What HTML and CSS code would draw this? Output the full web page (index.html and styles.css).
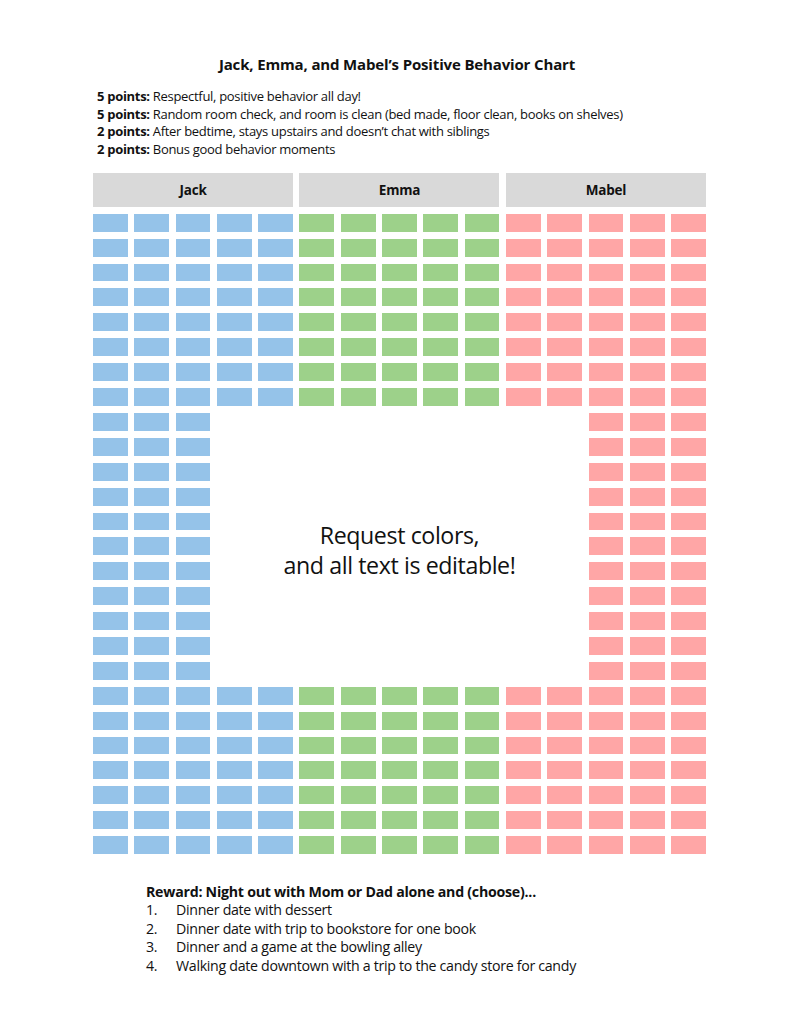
FILE: index.html
```html
<!DOCTYPE html>
<html>
<head>
<meta charset="utf-8">
<link rel="stylesheet" href="styles.css">
</head>
<body>
<h1 class="title">Jack, Emma, and Mabel’s Positive Behavior Chart</h1>
<ul class="points">
<li><b>5 points:</b> Respectful, positive behavior all day!</li>
<li><b>5 points:</b> Random room check, and room is clean (bed made, floor clean, books on shelves)</li>
<li><b>2 points:</b> After bedtime, stays upstairs and doesn’t chat with siblings</li>
<li><b>2 points:</b> Bonus good behavior moments</li>
</ul>
<div class="chart">
<div class="head">Jack</div><div class="head">Emma</div><div class="head">Mabel</div>
<div class="note">Request colors,<br>and all text is editable!</div>
<i class="b"></i><i class="b"></i><i class="b"></i><i class="b"></i><i class="b"></i><i class="g"></i><i class="g"></i><i class="g"></i><i class="g"></i><i class="g"></i><i class="r"></i><i class="r"></i><i class="r"></i><i class="r"></i><i class="r"></i>
<i class="b"></i><i class="b"></i><i class="b"></i><i class="b"></i><i class="b"></i><i class="g"></i><i class="g"></i><i class="g"></i><i class="g"></i><i class="g"></i><i class="r"></i><i class="r"></i><i class="r"></i><i class="r"></i><i class="r"></i>
<i class="b"></i><i class="b"></i><i class="b"></i><i class="b"></i><i class="b"></i><i class="g"></i><i class="g"></i><i class="g"></i><i class="g"></i><i class="g"></i><i class="r"></i><i class="r"></i><i class="r"></i><i class="r"></i><i class="r"></i>
<i class="b"></i><i class="b"></i><i class="b"></i><i class="b"></i><i class="b"></i><i class="g"></i><i class="g"></i><i class="g"></i><i class="g"></i><i class="g"></i><i class="r"></i><i class="r"></i><i class="r"></i><i class="r"></i><i class="r"></i>
<i class="b"></i><i class="b"></i><i class="b"></i><i class="b"></i><i class="b"></i><i class="g"></i><i class="g"></i><i class="g"></i><i class="g"></i><i class="g"></i><i class="r"></i><i class="r"></i><i class="r"></i><i class="r"></i><i class="r"></i>
<i class="b"></i><i class="b"></i><i class="b"></i><i class="b"></i><i class="b"></i><i class="g"></i><i class="g"></i><i class="g"></i><i class="g"></i><i class="g"></i><i class="r"></i><i class="r"></i><i class="r"></i><i class="r"></i><i class="r"></i>
<i class="b"></i><i class="b"></i><i class="b"></i><i class="b"></i><i class="b"></i><i class="g"></i><i class="g"></i><i class="g"></i><i class="g"></i><i class="g"></i><i class="r"></i><i class="r"></i><i class="r"></i><i class="r"></i><i class="r"></i>
<i class="b"></i><i class="b"></i><i class="b"></i><i class="b"></i><i class="b"></i><i class="g"></i><i class="g"></i><i class="g"></i><i class="g"></i><i class="g"></i><i class="r"></i><i class="r"></i><i class="r"></i><i class="r"></i><i class="r"></i>
<i class="b"></i><i class="b"></i><i class="b"></i><i class="r"></i><i class="r"></i><i class="r"></i>
<i class="b"></i><i class="b"></i><i class="b"></i><i class="r"></i><i class="r"></i><i class="r"></i>
<i class="b"></i><i class="b"></i><i class="b"></i><i class="r"></i><i class="r"></i><i class="r"></i>
<i class="b"></i><i class="b"></i><i class="b"></i><i class="r"></i><i class="r"></i><i class="r"></i>
<i class="b"></i><i class="b"></i><i class="b"></i><i class="r"></i><i class="r"></i><i class="r"></i>
<i class="b"></i><i class="b"></i><i class="b"></i><i class="r"></i><i class="r"></i><i class="r"></i>
<i class="b"></i><i class="b"></i><i class="b"></i><i class="r"></i><i class="r"></i><i class="r"></i>
<i class="b"></i><i class="b"></i><i class="b"></i><i class="r"></i><i class="r"></i><i class="r"></i>
<i class="b"></i><i class="b"></i><i class="b"></i><i class="r"></i><i class="r"></i><i class="r"></i>
<i class="b"></i><i class="b"></i><i class="b"></i><i class="r"></i><i class="r"></i><i class="r"></i>
<i class="b"></i><i class="b"></i><i class="b"></i><i class="r"></i><i class="r"></i><i class="r"></i>
<i class="b"></i><i class="b"></i><i class="b"></i><i class="b"></i><i class="b"></i><i class="g"></i><i class="g"></i><i class="g"></i><i class="g"></i><i class="g"></i><i class="r"></i><i class="r"></i><i class="r"></i><i class="r"></i><i class="r"></i>
<i class="b"></i><i class="b"></i><i class="b"></i><i class="b"></i><i class="b"></i><i class="g"></i><i class="g"></i><i class="g"></i><i class="g"></i><i class="g"></i><i class="r"></i><i class="r"></i><i class="r"></i><i class="r"></i><i class="r"></i>
<i class="b"></i><i class="b"></i><i class="b"></i><i class="b"></i><i class="b"></i><i class="g"></i><i class="g"></i><i class="g"></i><i class="g"></i><i class="g"></i><i class="r"></i><i class="r"></i><i class="r"></i><i class="r"></i><i class="r"></i>
<i class="b"></i><i class="b"></i><i class="b"></i><i class="b"></i><i class="b"></i><i class="g"></i><i class="g"></i><i class="g"></i><i class="g"></i><i class="g"></i><i class="r"></i><i class="r"></i><i class="r"></i><i class="r"></i><i class="r"></i>
<i class="b"></i><i class="b"></i><i class="b"></i><i class="b"></i><i class="b"></i><i class="g"></i><i class="g"></i><i class="g"></i><i class="g"></i><i class="g"></i><i class="r"></i><i class="r"></i><i class="r"></i><i class="r"></i><i class="r"></i>
<i class="b"></i><i class="b"></i><i class="b"></i><i class="b"></i><i class="b"></i><i class="g"></i><i class="g"></i><i class="g"></i><i class="g"></i><i class="g"></i><i class="r"></i><i class="r"></i><i class="r"></i><i class="r"></i><i class="r"></i>
<i class="b"></i><i class="b"></i><i class="b"></i><i class="b"></i><i class="b"></i><i class="g"></i><i class="g"></i><i class="g"></i><i class="g"></i><i class="g"></i><i class="r"></i><i class="r"></i><i class="r"></i><i class="r"></i><i class="r"></i>
</div>
<div class="reward">
<p class="reward-title">Reward: Night out with Mom or Dad alone and (choose)...</p>
<ol class="choices">
<li><span class="num">1.</span>Dinner date with dessert</li>
<li><span class="num">2.</span>Dinner date with trip to bookstore for one book</li>
<li><span class="num">3.</span>Dinner and a game at the bowling alley</li>
<li><span class="num">4.</span>Walking date downtown with a trip to the candy store for candy</li>
</ol>
</div>
</body>
</html>
```
FILE: styles.css
```css
html, body {
  margin: 0;
  padding: 0;
  background: #ffffff;
}
body {
  font-family: "Open Sans", "Noto Sans", sans-serif;
  color: #111111;
  width: 794px;
}
.title {
  margin: 54px 0 0 0;
  font-size: 15px;
  line-height: 20px;
  font-weight: 700;
  text-align: center;
  letter-spacing: -0.15px;
}
.points {
  list-style: none;
  margin: 14px 0 0 97px;
  padding: 0;
  font-size: 13px;
  line-height: 17.7px;
  letter-spacing: -0.3px;
}
.points b {
  font-weight: 700;
}
.chart {
  margin: 14px 0 0 93px;
  width: 613px;
  display: grid;
  grid-template-columns: repeat(15, 1fr);
  grid-template-rows: 34px repeat(26, 17.9px);
  column-gap: 6.5px;
  row-gap: 7px;
}
.head {
  grid-column: span 5;
  background: #d9d9d9;
  display: flex;
  align-items: center;
  justify-content: center;
  font-weight: 700;
  font-size: 13.5px;
  letter-spacing: -0.2px;
}
.chart i {
  display: block;
}
.chart .b { background: #95c3e9; }
.chart .g { background: #9dd18a; }
.chart .r { background: #ffa6a6; }
.note {
  grid-column: 4 / 13;
  grid-row: 10 / 21;
  display: flex;
  align-items: center;
  justify-content: center;
  text-align: center;
  font-size: 23.2px;
  line-height: 30px;
  letter-spacing: -0.4px;
  padding-top: 8px;
}
.reward {
  margin: 28px 0 0 146px;
}
.reward-title {
  margin: 0;
  font-size: 14.2px;
  line-height: 19px;
  font-weight: 700;
  letter-spacing: -0.25px;
}
.choices {
  list-style: none;
  margin: 0;
  padding: 0;
  font-size: 14.2px;
  line-height: 18.7px;
  letter-spacing: -0.3px;
}
.choices li {
  display: flex;
}
.num {
  width: 30px;
  flex: none;
}
```
